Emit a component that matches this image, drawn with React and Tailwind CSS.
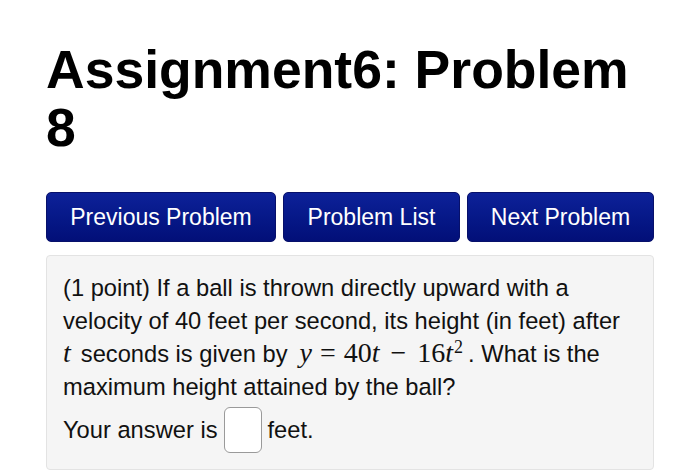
const sans = { fontFamily: '"Liberation Sans", Arial, Helvetica, sans-serif' };

const NavButton = ({ label, width }) => (
  <button
    className={`${width} h-[50px] rounded-[5px] border border-[#07106a] bg-gradient-to-b from-[#0d2199] to-[#020f78] text-[23px] leading-none text-white`}
  >
    {label}
  </button>
);

const MathT = () => <i className="font-['Liberation_Serif',serif]">t</i>;

export default function App() {
  return (
    <div className="min-h-[476px] w-[700px] bg-white px-[46px] pt-[41px] text-[#111]" style={sans}>
      <h1 className="text-[53.5px] font-bold leading-[58px] text-black">Assignment6: Problem 8</h1>

      <div className="mt-[35px] flex gap-[7px]">
        <NavButton label="Previous Problem" width="w-[230px]" />
        <NavButton label="Problem List" width="w-[177px]" />
        <NavButton label="Next Problem" width="w-[187px]" />
      </div>

      <div className="mt-[13px] rounded-[4px] border border-[#e3e3e3] bg-[#f5f5f5] px-[16px] pt-[16px] pb-[13px] text-[23.7px] leading-[33px]">
        <div className="whitespace-nowrap">(1 point) If a ball is thrown directly upward with a</div>
        <div className="whitespace-nowrap">velocity of 40 feet per second, its height (in feet) after</div>
        <div className="whitespace-nowrap">
          <span className="mr-[10px] text-[28px] leading-[20px]">
            <MathT />
          </span>
          seconds is given by
          <span className="ml-[12px] font-['Liberation_Serif',serif] text-[28px] leading-[20px]">
            <i>y</i>
            <span className="mx-[8px]">=</span>
            40<i>t</i>
            <span className="mx-[11px]">−</span>
            16<i>t</i>
            <sup className="ml-[1px] text-[18px]">2</sup>
          </span>
          <span className="ml-[5px]">. What is the</span>
        </div>
        <div className="whitespace-nowrap">maximum height attained by the ball?</div>
        <div className="flex items-center py-[3px]">
          <span>Your answer is</span>
          <span className="mx-[6px] inline-block h-[46px] w-[38px] rounded-[6px] border border-[#9a9a9a] bg-white" />
          <span>feet.</span>
        </div>
      </div>
    </div>
  );
}
